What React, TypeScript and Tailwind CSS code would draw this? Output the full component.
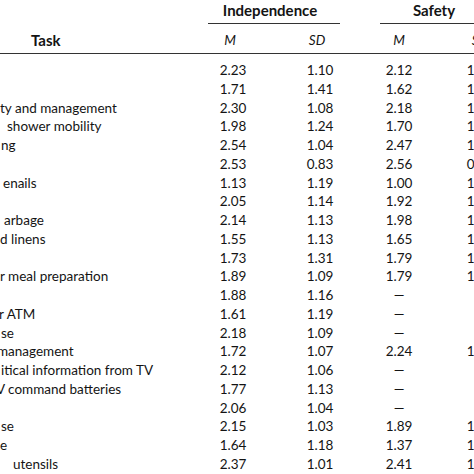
const rows = [
  { task: "", x: 0, im: "2.23", isd: "1.10", sm: "2.12", ssd: "1.13" },
  { task: "", x: 0, im: "1.71", isd: "1.41", sm: "1.62", ssd: "1.35" },
  { task: "ty and management", x: 0, im: "2.30", isd: "1.08", sm: "2.18", ssd: "1.11" },
  { task: "shower mobility", x: 7, im: "1.98", isd: "1.24", sm: "1.70", ssd: "1.24" },
  { task: "ng", x: 1, im: "2.54", isd: "1.04", sm: "2.47", ssd: "1.07" },
  { task: "", x: 0, im: "2.53", isd: "0.83", sm: "2.56", ssd: "0.81" },
  { task: "enails", x: 3, im: "1.13", isd: "1.19", sm: "1.00", ssd: "1.16" },
  { task: "", x: 0, im: "2.05", isd: "1.14", sm: "1.92", ssd: "1.18" },
  { task: "arbage", x: 4, im: "2.14", isd: "1.13", sm: "1.98", ssd: "1.17" },
  { task: "d linens", x: 0, im: "1.55", isd: "1.13", sm: "1.65", ssd: "1.14" },
  { task: "", x: 0, im: "1.73", isd: "1.31", sm: "1.79", ssd: "1.28" },
  { task: "r meal preparation", x: 0, im: "1.89", isd: "1.09", sm: "1.79", ssd: "1.12" },
  { task: "", x: 0, im: "1.88", isd: "1.16", sm: "—", ssd: "—" },
  { task: "r ATM", x: -1, im: "1.61", isd: "1.19", sm: "—", ssd: "—" },
  { task: "se", x: 1, im: "2.18", isd: "1.09", sm: "—", ssd: "—" },
  { task: "management", x: -3, im: "1.72", isd: "1.07", sm: "2.24", ssd: "1.10" },
  { task: "itical information from TV", x: 1, im: "2.12", isd: "1.06", sm: "—", ssd: "—" },
  { task: "TV command batteries", x: -12, im: "1.77", isd: "1.13", sm: "—", ssd: "—" },
  { task: "", x: 0, im: "2.06", isd: "1.04", sm: "—", ssd: "—" },
  { task: "se", x: 1, im: "2.15", isd: "1.03", sm: "1.89", ssd: "1.06" },
  { task: "e", x: 0, im: "1.64", isd: "1.18", sm: "1.37", ssd: "1.15" },
  { task: "utensils", x: 13, im: "2.37", isd: "1.01", sm: "2.41", ssd: "1.02" },
];

const cols = "grid grid-cols-[198px_70px_104px_54px_108px]";

export default function App() {
  return (
    <div className="h-[474px] w-[474px] overflow-hidden bg-white font-['Lato',sans-serif] text-[13.5px] text-[#141414]">
      <div className="w-[534px]">
        {/* group header */}
        <div className={`${cols} h-[25px]`}>
          <div />
          <div className="col-span-2 pl-[10px] pr-[32px]">
            <div className="h-[24px] border-b border-[#333] pr-[8px] text-center text-[15px] font-bold leading-[20px]">
              Independence
            </div>
          </div>
          <div className="col-span-2 pl-[8px] pr-[46px]">
            <div className="h-[24px] border-b border-[#333] text-center text-[15px] font-bold leading-[20px]">
              Safety
            </div>
          </div>
        </div>

        {/* column header */}
        <div className={`${cols} h-[29px] border-b border-[#333] pt-[6px] leading-[18px]`}>
          <div className="pl-[31px] text-[15px] font-bold">Task</div>
          <div className="pr-[6px] text-center italic">M</div>
          <div className="pr-[6px] text-center italic">SD</div>
          <div className="text-center italic">M</div>
          <div className="text-center italic">SD</div>
        </div>

        {/* data */}
        <div className="pt-[7px]">
          {rows.map((row, index) => (
            <div key={index} className={`${cols} h-[18.76px] leading-[18.76px]`}>
              <div
                className="overflow-hidden whitespace-nowrap"
                style={{ paddingLeft: Math.max(row.x, 0) }}
              >
                <span style={{ marginLeft: Math.min(row.x, 0) }}>{row.task}</span>
              </div>
              <div className="text-center">{row.im}</div>
              <div className="text-center">{row.isd}</div>
              <div className="text-center">{row.sm}</div>
              <div className="text-center">{row.ssd}</div>
            </div>
          ))}
        </div>
      </div>
    </div>
  );
}
